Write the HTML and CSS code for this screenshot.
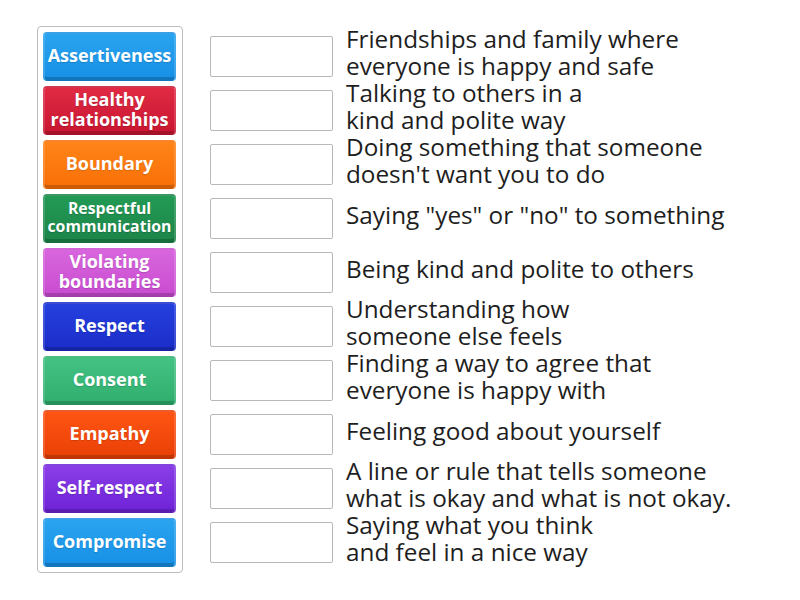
FILE: index.html
```html
<!DOCTYPE html>
<html>
<head>
<meta charset="utf-8">
<link rel="stylesheet" href="styles.css">
</head>
<body>
<div class="page">
  <div class="panel">
    <div class="btn c1">Assertiveness</div>
    <div class="btn c2 two">Healthy relationships</div>
    <div class="btn c3">Boundary</div>
    <div class="btn c4 small">Respectful communication</div>
    <div class="btn c5 two">Violating boundaries</div>
    <div class="btn c6">Respect</div>
    <div class="btn c7">Consent</div>
    <div class="btn c8">Empathy</div>
    <div class="btn c9">Self-respect</div>
    <div class="btn c10">Compromise</div>
  </div>
  <div class="rows">
    <div class="row"><div class="box"></div><div class="txt">Friendships and family where<br>everyone is happy and safe</div></div>
    <div class="row"><div class="box"></div><div class="txt">Talking to others in a<br>kind and polite way</div></div>
    <div class="row"><div class="box"></div><div class="txt">Doing something that someone<br>doesn't want you to do</div></div>
    <div class="row"><div class="box"></div><div class="txt">Saying "yes" or "no" to something</div></div>
    <div class="row"><div class="box"></div><div class="txt">Being kind and polite to others</div></div>
    <div class="row"><div class="box"></div><div class="txt">Understanding how<br>someone else feels</div></div>
    <div class="row"><div class="box"></div><div class="txt">Finding a way to agree that<br>everyone is happy with</div></div>
    <div class="row"><div class="box"></div><div class="txt">Feeling good about yourself</div></div>
    <div class="row"><div class="box"></div><div class="txt">A line or rule that tells someone<br>what is okay and what is not okay.</div></div>
    <div class="row"><div class="box"></div><div class="txt">Saying what you think<br>and feel in a nice way</div></div>
  </div>
</div>
</body>
</html>
```
FILE: styles.css
```css
html, body {
  margin: 0;
  padding: 0;
  background: #fff;
}
body {
  font-family: "Open Sans", "Liberation Sans", sans-serif;
}
.page {
  display: flex;
  align-items: flex-start;
  padding: 26px 0 0 37px;
}
.panel {
  box-sizing: border-box;
  width: 146px;
  border: 1px solid #bcbcbc;
  border-radius: 4px;
  padding: 5px 6px 5px 5px;
  display: flex;
  flex-direction: column;
  gap: 5px;
}
.btn {
  box-sizing: border-box;
  height: 49px;
  border-radius: 4px;
  display: flex;
  align-items: center;
  justify-content: center;
  text-align: center;
  color: #fff;
  font-weight: 700;
  font-size: 18px;
  line-height: 20px;
  padding: 0 1px 5px;
  border: 2px solid rgba(255,255,255,0.15);
  border-bottom: 0;
  box-shadow: inset 0 -4px 0 rgba(0,0,0,0.18);
  text-shadow: 0 1px 1px rgba(0,0,0,0.15);
}
.btn.small {
  font-size: 15.8px;
  line-height: 18px;
}
.c1 { background: linear-gradient(#2aa3ef, #1690e6); }
.c2 { background: linear-gradient(#e02a44, #c81530); }
.c3 { background: linear-gradient(#ff8419, #f86f06); }
.c4 { background: linear-gradient(#239a55, #1c8448); }
.c5 { background: linear-gradient(#d866dd, #c84bd0); }
.c6 { background: linear-gradient(#2540de, #1b2cc8); }
.c7 { background: linear-gradient(#43c283, #2fae6d); }
.c8 { background: linear-gradient(#ff5513, #e83f06); }
.c9 { background: linear-gradient(#8a3ee6, #6d22d8); }
.c10 { background: linear-gradient(#2aa3ef, #1690e6); }
.rows {
  display: flex;
  flex-direction: column;
  gap: 5px;
  padding-top: 6px;
  margin-left: 27px;
}
.row {
  height: 49px;
  display: flex;
  align-items: center;
}
.box {
  box-sizing: border-box;
  width: 123px;
  height: 41px;
  border: 1px solid #b8b8b8;
  border-radius: 2px;
  flex: none;
}
.txt {
  margin-left: 13px;
  font-size: 24.3px;
  line-height: 27px;
  color: #1e1e1e;
  white-space: nowrap;
  margin-top: -9px;
}
```
